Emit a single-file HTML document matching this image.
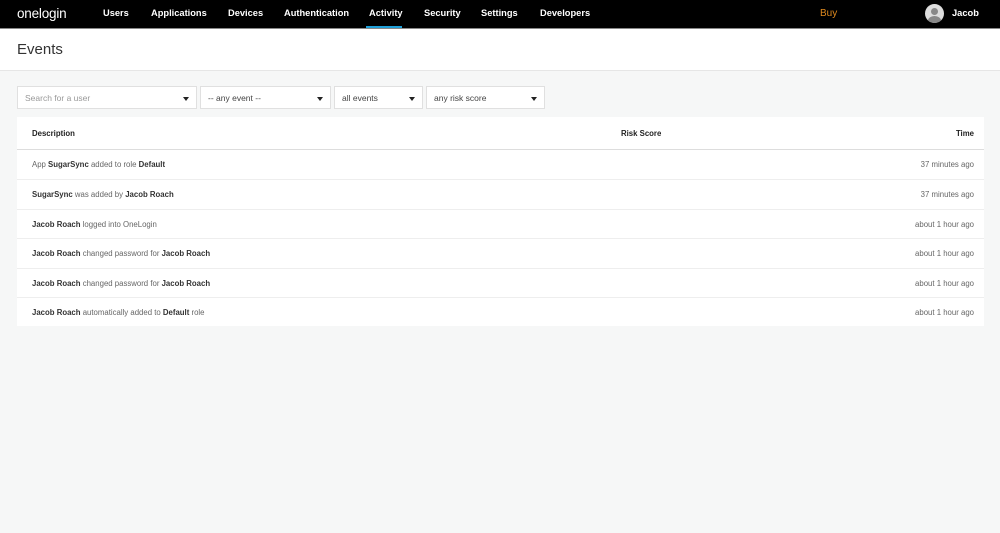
<!DOCTYPE html>
<html><head><style>
*{margin:0;padding:0;box-sizing:border-box}
body{width:1000px;height:533px;background:#f6f7f7;font-family:"Liberation Sans",sans-serif;position:relative;overflow:hidden}
.nav{position:absolute;top:0;left:0;width:1000px;height:29px;background:#000;border-bottom:1px solid #888}
.nav span{position:absolute;top:8px;color:#fff;font-size:9.3px;font-weight:bold}
.logo{left:17px;font-size:13.5px!important;top:6px!important;font-weight:normal!important;letter-spacing:-0.2px}
.act{position:absolute;left:366px;top:26px;width:36px;height:2px;background:#1fa0d8}
.head{position:absolute;top:29px;left:0;width:1000px;height:42px;background:#fff;border-bottom:1px solid #e6e6e6}
.head h1{position:absolute;left:17px;top:12px;font-size:15px;font-weight:normal;color:#333}
.sel{position:absolute;top:86px;height:23px;background:#fff;border:1px solid #e0e0e0;font-size:8.5px;color:#444;padding:6px 7px}
.sel:after{content:"";position:absolute;right:7px;top:10px;border:3px solid transparent;border-top:4px solid #222}
.tbl{position:absolute;left:17px;top:117px;width:967px;background:#fff}
.row{height:29.4px;border-top:1px solid #eee;position:relative;font-size:7.8px;color:#666}
.row span{position:absolute;top:10px}
.row b{color:#333}
.th{height:33px;border-bottom:1px solid #ddd;position:relative;font-size:7.8px;font-weight:bold;color:#222}
.th span{position:absolute;top:12px}
.l{left:15px}.r{right:10px}
</style></head><body>
<div class="nav">
<span class="logo">onelogin</span>
<span style="left:103px">Users</span>
<span style="left:151px">Applications</span>
<span style="left:228px">Devices</span>
<span style="left:284px">Authentication</span>
<span style="left:369px">Activity</span>
<span style="left:424px">Security</span>
<span style="left:481px">Settings</span>
<span style="left:540px">Developers</span>
<span style="left:820px;color:#e08a1e;font-weight:normal;font-size:10px">Buy</span>
<div style="position:absolute;left:925px;top:4px;width:19px;height:19px;border-radius:50%;background:#ddd;overflow:hidden"><div style="position:absolute;left:6px;top:4px;width:7px;height:7px;border-radius:50%;background:#888"></div><div style="position:absolute;left:3px;top:12px;width:13px;height:9px;border-radius:50%;background:#888"></div></div>
<span style="left:952px">Jacob</span>
<div class="act"></div>
</div>
<div class="head"><h1>Events</h1></div>
<div class="sel" style="left:17px;width:180px;color:#999">Search for a user</div>
<div class="sel" style="left:200px;width:131px">-- any event --</div>
<div class="sel" style="left:334px;width:89px">all events</div>
<div class="sel" style="left:426px;width:119px">any risk score</div>
<div class="tbl">
<div class="th"><span class="l">Description</span><span style="left:604px">Risk Score</span><span class="r">Time</span></div>
<div class="row" style="border-top:none"><span class="l">App <b>SugarSync</b> added to role <b>Default</b></span><span class="r">37 minutes ago</span></div>
<div class="row"><span class="l"><b>SugarSync</b> was added by <b>Jacob Roach</b></span><span class="r">37 minutes ago</span></div>
<div class="row"><span class="l"><b>Jacob Roach</b> logged into OneLogin</span><span class="r">about 1 hour ago</span></div>
<div class="row"><span class="l"><b>Jacob Roach</b> changed password for <b>Jacob Roach</b></span><span class="r">about 1 hour ago</span></div>
<div class="row"><span class="l"><b>Jacob Roach</b> changed password for <b>Jacob Roach</b></span><span class="r">about 1 hour ago</span></div>
<div class="row"><span class="l"><b>Jacob Roach</b> automatically added to <b>Default</b> role</span><span class="r">about 1 hour ago</span></div>
</div>
</body></html>
